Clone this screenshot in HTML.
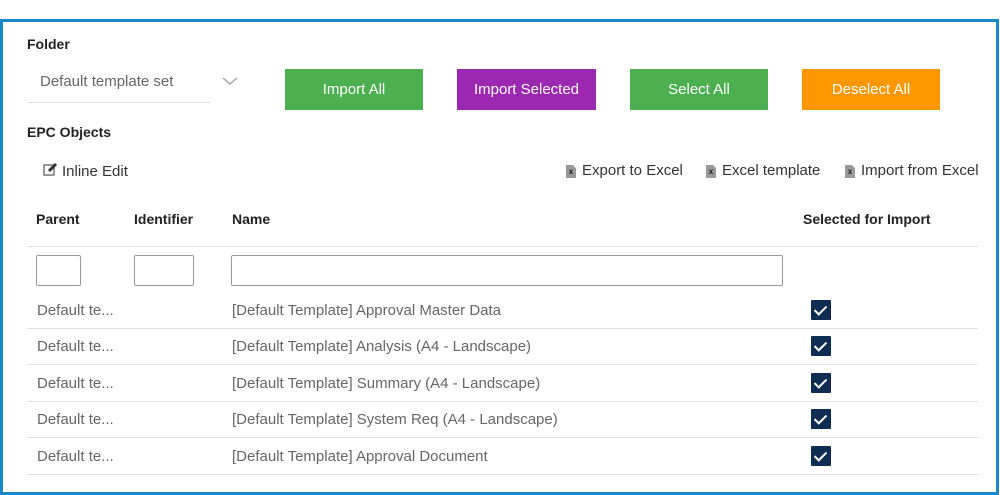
<!DOCTYPE html>
<html><head><style>
*{margin:0;padding:0;box-sizing:border-box}
body{width:1000px;height:495px;background:#fff;font-family:"Liberation Sans",Arial,sans-serif;position:relative;overflow:hidden;color:#222}
.frame{position:absolute;left:0;top:19px;width:999px;height:476px;border:3px solid #1a87c9}
.a{position:absolute;white-space:nowrap}
.b{font-weight:bold;font-size:14px;color:#222}
.btn{position:absolute;top:69px;height:41px;color:#fff;font-size:15px;text-align:center;line-height:41px}
.line{position:absolute;left:27px;width:951px;height:1px;background:#e2e2e2}
.cell{position:absolute;font-size:15px;color:#666}
.cb{position:absolute;left:811px;width:20px;height:20px;background:#0f2d52;border-radius:1px}
.cb:after{content:"";position:absolute;left:6px;top:3px;width:5px;height:10px;border:solid #fff;border-width:0 2px 2px 0;transform:rotate(45deg)}
.inp{position:absolute;top:255px;height:31px;border:1px solid #999;border-radius:2px}
.xl{display:inline-block;width:10px;height:13px;background:#999;color:#222;font-size:8px;line-height:14px;text-align:center;font-weight:bold;margin-right:6px;vertical-align:1px;clip-path:polygon(0 0,70% 0,100% 25%,100% 100%,0 100%)}
.tool{position:absolute;top:162px;font-size:15px;color:#333}
</style></head><body>
<div class="frame"></div>
<div class="a b" style="left:27px;top:36px">Folder</div>
<div class="a" style="left:40px;top:73px;font-size:15px;color:#666">Default template set</div>
<svg class="a" style="left:222px;top:76px" width="16" height="10"><path d="M1 2 L8 8 L15 2" stroke="#aaa" stroke-width="1.5" fill="none"/></svg>
<div class="a" style="left:27px;top:102px;width:183px;height:1px;background:#e0e0e0"></div>
<div class="btn" style="left:285px;width:138px;background:#4caf50">Import All</div>
<div class="btn" style="left:457px;width:139px;background:#9c27b0">Import Selected</div>
<div class="btn" style="left:630px;width:138px;background:#4caf50">Select All</div>
<div class="btn" style="left:802px;width:138px;background:#ff9800">Deselect All</div>
<div class="a b" style="left:27px;top:124px">EPC Objects</div>
<div class="tool" style="left:43px"><svg width="15" height="14" style="vertical-align:0px;margin-right:4px"><rect x="1" y="3" width="10" height="10" fill="none" stroke="#777" stroke-width="1.5"/><path d="M6 9 L13 2" stroke="#333" stroke-width="3"/></svg>Inline Edit</div>
<div class="tool" style="left:566px"><span class="xl">x</span>Export to Excel</div>
<div class="tool" style="left:706px"><span class="xl">x</span>Excel template</div>
<div class="tool" style="left:845px"><span class="xl">x</span>Import from Excel</div>
<div class="a b" style="left:36px;top:211px">Parent</div>
<div class="a b" style="left:134px;top:211px">Identifier</div>
<div class="a b" style="left:232px;top:211px">Name</div>
<div class="a b" style="left:803px;top:211px">Selected for Import</div>
<div class="line" style="top:246px"></div>
<div class="inp" style="left:36px;width:45px"></div>
<div class="inp" style="left:134px;width:60px"></div>
<div class="inp" style="left:231px;width:552px"></div>

<div class="cell" style="left:37px;top:302px">Default te...</div><div class="cell" style="left:232px;top:302px">[Default Template] Approval Master Data</div><div class="cb" style="top:300px"></div>
<div class="line" style="top:328px"></div>
<div class="cell" style="left:37px;top:338px">Default te...</div><div class="cell" style="left:232px;top:338px">[Default Template] Analysis (A4 - Landscape)</div><div class="cb" style="top:336px"></div>
<div class="line" style="top:364px"></div>
<div class="cell" style="left:37px;top:375px">Default te...</div><div class="cell" style="left:232px;top:375px">[Default Template] Summary (A4 - Landscape)</div><div class="cb" style="top:373px"></div>
<div class="line" style="top:401px"></div>
<div class="cell" style="left:37px;top:411px">Default te...</div><div class="cell" style="left:232px;top:411px">[Default Template] System Req (A4 - Landscape)</div><div class="cb" style="top:409px"></div>
<div class="line" style="top:437px"></div>
<div class="cell" style="left:37px;top:448px">Default te...</div><div class="cell" style="left:232px;top:448px">[Default Template] Approval Document</div><div class="cb" style="top:446px"></div>
<div class="line" style="top:474px"></div>
</body></html>
